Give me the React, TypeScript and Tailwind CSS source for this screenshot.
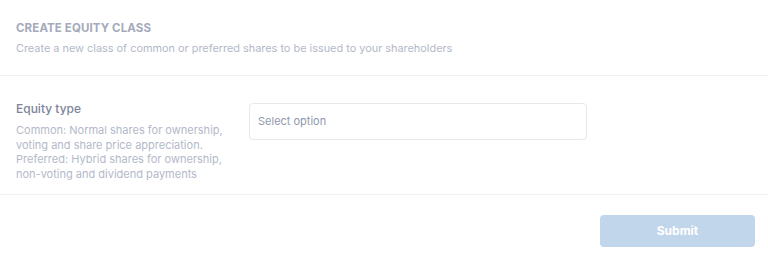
import React from 'react';

export default function App() {
  return (
    <div className="w-[768px] h-[254px] bg-white text-[#8f98ad]" style={{ fontFamily: 'Inter, "Noto Sans", sans-serif' }}>
      {/* Header */}
      <div className="h-[76px] px-4 pt-[21px] border-b border-[#f0f1f3]">
        <h2 className="text-[11.5px] leading-[14px] font-bold uppercase text-[#a4aabb] tracking-[0.01em]">Create equity class</h2>
        <p className="mt-[5px] text-[10.9px] leading-[16px] text-[#b3b9c9]">
          Create a new class of common or preferred shares to be issued to your shareholders
        </p>
      </div>

      {/* Form row */}
      <div className="h-[119px] px-4 pt-[25px] flex border-b border-[#f0f1f3]">
        <div className="w-[233px] shrink-0">
          <label className="block text-[12px] leading-[16px] font-medium text-[#7c849a]">Equity type</label>
          <p className="mt-[6px] text-[11px] leading-[14.5px] text-[#b3b9c9]">
            Common: Normal shares for ownership, voting and share price appreciation. Preferred: Hybrid shares for
            ownership, non-voting and dividend payments
          </p>
        </div>
        <div className="w-[338px] mt-[2px]">
          <select className="w-full h-[37px] px-2 rounded border border-[#e6e8ec] bg-white text-[11px] text-[#8f98ad] appearance-none outline-none">
            <option>Select option</option>
          </select>
        </div>
      </div>

      {/* Footer */}
      <div className="flex justify-end px-[13px] pt-5">
        <button className="w-[155px] h-[32px] rounded bg-[#c2d6eb] text-white text-[12px] font-bold">Submit</button>
      </div>
    </div>
  );
}
